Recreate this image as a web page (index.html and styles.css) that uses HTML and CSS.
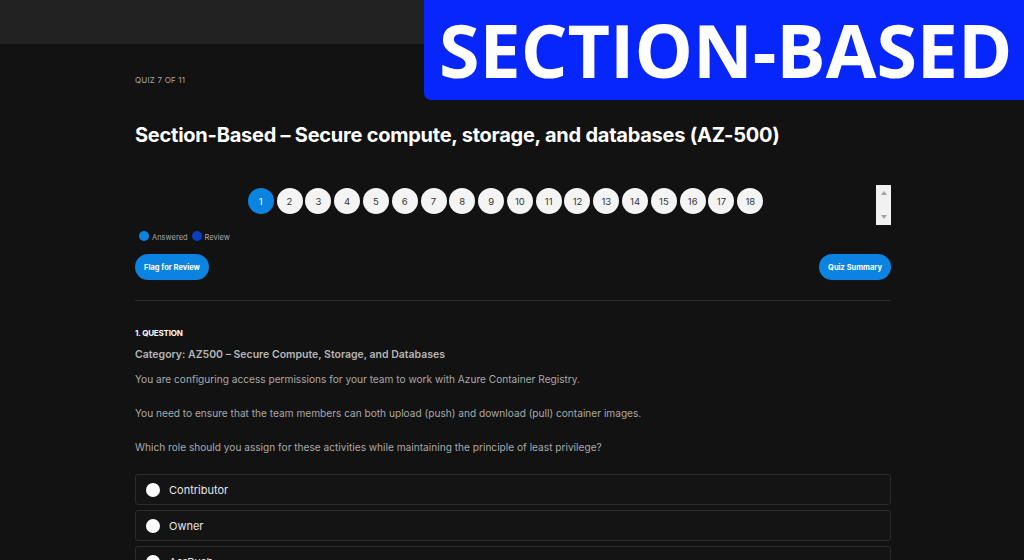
FILE: index.html
```html
<!DOCTYPE html>
<html lang="en">
<head>
<meta charset="utf-8">
<title>Section-Based Quiz</title>
<link rel="stylesheet" href="styles.css">
</head>
<body>
<header class="topbar"></header>
<div class="banner">SECTION-BASED</div>
<main class="quiz">
  <div class="quiz-label">QUIZ 7 OF 11</div>
  <h1 class="quiz-title">Section-Based – Secure compute, storage, and databases (AZ-500)</h1>
  <div class="pager">
    <div class="pager-list">
      <span class="pg pg-active">1</span><span class="pg">2</span><span class="pg">3</span><span class="pg">4</span><span class="pg">5</span><span class="pg">6</span><span class="pg">7</span><span class="pg">8</span><span class="pg">9</span><span class="pg">10</span><span class="pg">11</span><span class="pg">12</span><span class="pg">13</span><span class="pg">14</span><span class="pg">15</span><span class="pg">16</span><span class="pg">17</span><span class="pg">18</span>
    </div>
    <div class="scrollbar">
      <span class="arrow arrow-up"></span>
      <span class="arrow arrow-down"></span>
    </div>
  </div>
  <div class="legend">
    <span class="dot dot-answered"></span><span class="legend-text">Answered</span>
    <span class="dot dot-review"></span><span class="legend-text">Review</span>
  </div>
  <div class="actions">
    <button class="btn">Flag for Review</button>
    <button class="btn">Quiz Summary</button>
  </div>
  <hr class="divider">
  <div class="q-head">1. QUESTION</div>
  <p class="q-cat">Category: AZ500 – Secure Compute, Storage, and Databases</p>
  <p class="q-text">You are configuring access permissions for your team to work with Azure Container Registry.</p>
  <p class="q-text q-gap">You need to ensure that the team members can both upload (push) and download (pull) container images.</p>
  <p class="q-text q-gap">Which role should you assign for these activities while maintaining the principle of least privilege?</p>
  <ul class="options">
    <li class="option"><span class="radio"></span>Contributor</li>
    <li class="option"><span class="radio"></span>Owner</li>
    <li class="option"><span class="radio"></span>AcrPush</li>
  </ul>
</main>
</body>
</html>
```
FILE: styles.css
```css
html, body {
  margin: 0;
  padding: 0;
  background: #121212;
  height: 560px;
  overflow: hidden;
}
body {
  font-family: Inter, "Noto Sans", sans-serif;
  color: #ddd;
}
.topbar {
  height: 44px;
  background: #222222;
}
.banner {
  position: absolute;
  top: 0;
  left: 424px;
  width: 600px;
  height: 100px;
  background: #0626fc;
  border-bottom-left-radius: 7px;
  color: #fff;
  font-family: "Open Sans", "Noto Sans", sans-serif;
  font-weight: 700;
  font-size: 73.5px;
  line-height: 100px;
  box-sizing: border-box;
  padding-left: 15px;
  white-space: nowrap;
}
.quiz {
  width: 756px;
  margin-left: 135px;
}
.quiz-label {
  margin-top: 31px;
  font-size: 8px;
  line-height: 10px;
  color: #a8a8a8;
  letter-spacing: 0.2px;
}
.quiz-title {
  margin: 38px 0 0;
  font-size: 20px;
  line-height: 24px;
  font-weight: 700;
  color: #fff;
  letter-spacing: -0.24px;
}
.pager {
  margin-top: 38px;
  height: 40px;
  display: flex;
}
.pager-list {
  flex: 1;
  display: flex;
  justify-content: center;
  gap: 2.8px;
  padding-top: 3px;
}
.pg {
  width: 26px;
  height: 26px;
  border-radius: 50%;
  background: #f4f4f5;
  color: #333;
  font-size: 9.5px;
  display: flex;
  align-items: center;
  justify-content: center;
  flex: none;
}
.pg-active {
  background: #0a84e0;
  color: #fff;
}
.scrollbar {
  width: 15px;
  height: 40px;
  background: #f1f1f1;
  display: flex;
  flex-direction: column;
  justify-content: space-between;
  align-items: center;
  padding: 6px 0;
  box-sizing: border-box;
}
.arrow {
  width: 0;
  height: 0;
  border-left: 3.5px solid transparent;
  border-right: 3.5px solid transparent;
}
.arrow-up { border-bottom: 4px solid #a3a3a3; }
.arrow-down { border-top: 4px solid #a3a3a3; }
.legend {
  margin-top: 5px;
  display: flex;
  align-items: center;
  height: 12px;
  padding-left: 4px;
}
.dot {
  width: 10px;
  height: 10px;
  border-radius: 50%;
  margin-right: 3px;
}
.dot-answered { background: #0a84e0; }
.dot-review { background: #0a3fc0; }
.legend-text {
  font-size: 7.5px;
  color: #a8a8a8;
  margin-right: 4px;
  margin-top: 3px;
}
.actions {
  margin-top: 12px;
  display: flex;
  justify-content: space-between;
}
.btn {
  height: 26px;
  border: none;
  border-radius: 13px;
  background: #0a84e0;
  color: #fff;
  font-family: Inter, sans-serif;
  font-weight: 700;
  font-size: 7.5px;
  padding: 0 9px;
}
.divider {
  margin: 20px 0 0;
  border: none;
  border-top: 1px solid #2c2c2c;
  height: 0;
}
.q-head {
  margin-top: 27px;
  font-size: 8px;
  line-height: 10px;
  font-weight: 700;
  color: #fff;
  letter-spacing: -0.2px;
}
.q-cat {
  margin: 10px 0 0;
  font-size: 10.5px;
  line-height: 14px;
  font-weight: 600;
  color: #b5b5b5;
}
.q-text {
  margin: 10px 0 0;
  font-size: 10.15px;
  line-height: 14px;
  color: #a8a8a8;
}
.q-gap {
  margin-top: 20px;
}
.options {
  list-style: none;
  margin: 20px 0 0;
  padding: 0;
  display: flex;
  flex-direction: column;
  gap: 5px;
}
.option {
  height: 31px;
  box-sizing: border-box;
  border: 1px solid #2c2c2c;
  border-radius: 3px;
  background: #141414;
  display: flex;
  align-items: center;
  padding-left: 10px;
  font-size: 11px;
  color: #e6e6e6;
}
.radio {
  width: 14px;
  height: 14px;
  border-radius: 50%;
  background: #fff;
  margin-right: 9px;
  flex: none;
}
```
